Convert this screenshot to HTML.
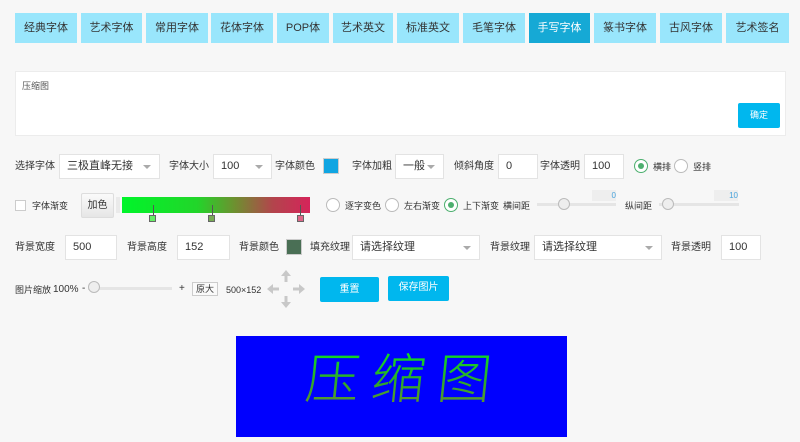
<!DOCTYPE html>
<html><head><meta charset="utf-8"><style>
*{margin:0;padding:0;box-sizing:border-box}
html,body{width:800px;height:442px;overflow:hidden}
body{background:#f7f7f7;font-family:"Liberation Sans","Noto Sans CJK SC",sans-serif;font-size:10px;color:#333;position:relative}
.a{position:absolute}
.tab{position:absolute;top:13px;height:30px;background:#99e6fc;line-height:30px;text-align:center;font-size:11px;color:#333}
.tab.on{background:#16a9d5;color:#fff}
.lbl{position:absolute;font-size:10px;color:#333;line-height:14px;white-space:nowrap}
.inp{position:absolute;background:#fff;border:1px solid #e3e3e3;height:25px;line-height:23px;padding-left:7px;font-size:11px;color:#333;white-space:nowrap}
.sel:after{content:"";position:absolute;right:8px;top:10px;border-left:4px solid transparent;border-right:4px solid transparent;border-top:4px solid #aaa}
.rad{position:absolute;width:14px;height:14px;border:1px solid #bbb;border-radius:50%;background:#fff}
.rad.on{border-color:#4caf6e}
.rad.on:after{content:"";position:absolute;left:3px;top:3px;width:6px;height:6px;border-radius:50%;background:#4caf6e}
.btn{position:absolute;background:#00b7ee;color:#fff;text-align:center;border-radius:2px}
.track{position:absolute;height:3px;background:#e5e5e5}
.knob{position:absolute;width:12px;height:12px;border-radius:50%;background:#eee;border:1px solid #bbb}
</style></head><body>
<div class="tab" style="left:15px;width:62px">经典字体</div>
<div class="tab" style="left:81px;width:61px">艺术字体</div>
<div class="tab" style="left:146px;width:62px">常用字体</div>
<div class="tab" style="left:211px;width:62px">花体字体</div>
<div class="tab" style="left:277px;width:52px">POP体</div>
<div class="tab" style="left:333px;width:60px">艺术英文</div>
<div class="tab" style="left:397px;width:62px">标准英文</div>
<div class="tab" style="left:463px;width:62px">毛笔字体</div>
<div class="tab on" style="left:529px;width:61px">手写字体</div>
<div class="tab" style="left:594px;width:62px">篆书字体</div>
<div class="tab" style="left:660px;width:62px">古风字体</div>
<div class="tab" style="left:726px;width:63px">艺术签名</div>

<div class="a" style="left:15px;top:71px;width:771px;height:65px;background:#fff;border:1px solid #ececec"></div>
<div class="lbl" style="left:22px;top:79px;font-size:9px;color:#555">压缩图</div>
<div class="btn" style="left:738px;top:103px;width:42px;height:25px;line-height:25px;font-size:9px">确定</div>

<!-- row1 -->
<div class="lbl" style="left:15px;top:160px">选择字体</div>
<div class="inp sel" style="left:59px;top:154px;width:101px">三极直峰无接</div>
<div class="lbl" style="left:169px;top:160px">字体大小</div>
<div class="inp sel" style="left:213px;top:154px;width:59px">100</div>
<div class="lbl" style="left:275px;top:160px">字体颜色</div>
<div class="a" style="left:323px;top:158px;width:16px;height:16px;background:#10a5e2;border:1px solid #ccc"></div>
<div class="lbl" style="left:352px;top:160px">字体加粗</div>
<div class="inp sel" style="left:395px;top:154px;width:49px">一般</div>
<div class="lbl" style="left:454px;top:160px">倾斜角度</div>
<div class="inp" style="left:498px;top:154px;width:40px">0</div>
<div class="lbl" style="left:540px;top:160px">字体透明</div>
<div class="inp" style="left:584px;top:154px;width:40px">100</div>
<div class="rad on" style="left:634px;top:159px"></div>
<div class="lbl" style="left:653px;top:160px;font-size:9px">横排</div>
<div class="rad" style="left:674px;top:159px"></div>
<div class="lbl" style="left:693px;top:160px;font-size:9px">竖排</div>

<!-- row2 -->
<div class="a" style="left:15px;top:200px;width:11px;height:11px;background:#fff;border:1px solid #ccc"></div>
<div class="lbl" style="left:32px;top:199px;font-size:9px">字体渐变</div>
<div class="a" style="left:81px;top:193px;width:33px;height:25px;background:linear-gradient(#fafafa,#e6e6e6);border:1px solid #ddd;border-radius:2px;text-align:center;line-height:23px;font-size:10px">加色</div>
<div class="a" style="left:116px;top:197px;width:4px;height:16px;background:#eaeaea"></div>
<div class="a" style="left:122px;top:197px;width:188px;height:16px;background:linear-gradient(90deg,#00f52a 0%,#22d52a 40%,#6e9030 60%,#b2454c 80%,#d5245a 100%)"></div>
<div class="a" style="left:153px;top:205px;width:1px;height:11px;background:#555"></div>
<div class="a" style="left:212px;top:205px;width:1px;height:11px;background:#555"></div>
<div class="a" style="left:300px;top:205px;width:1px;height:11px;background:#555"></div>
<div class="a" style="left:149px;top:215px;width:7px;height:7px;background:#66ee66;border:1px solid #666"></div>
<div class="a" style="left:208px;top:215px;width:7px;height:7px;background:#77aa55;border:1px solid #666"></div>
<div class="a" style="left:297px;top:215px;width:7px;height:7px;background:#dd6688;border:1px solid #666"></div>
<div class="rad" style="left:326px;top:198px"></div>
<div class="lbl" style="left:345px;top:199px;font-size:9px">逐字变色</div>
<div class="rad" style="left:385px;top:198px"></div>
<div class="lbl" style="left:404px;top:199px;font-size:9px">左右渐变</div>
<div class="rad on" style="left:444px;top:198px"></div>
<div class="lbl" style="left:463px;top:199px;font-size:9px">上下渐变</div>
<div class="lbl" style="left:503px;top:199px;font-size:9px">横间距</div>
<div class="a" style="left:592px;top:190px;width:24px;height:11px;background:#eee;color:#49a4dd;font-size:8px;text-align:right;line-height:11px">0</div>
<div class="track" style="left:537px;top:203px;width:79px"></div>
<div class="knob" style="left:558px;top:198px"></div>
<div class="lbl" style="left:625px;top:199px;font-size:9px">纵间距</div>
<div class="a" style="left:714px;top:190px;width:24px;height:11px;background:#eee;color:#49a4dd;font-size:8px;text-align:right;line-height:11px">10</div>
<div class="track" style="left:659px;top:203px;width:80px"></div>
<div class="knob" style="left:662px;top:198px"></div>

<!-- row3 -->
<div class="lbl" style="left:15px;top:241px">背景宽度</div>
<div class="inp" style="left:65px;top:235px;width:52px">500</div>
<div class="lbl" style="left:127px;top:241px">背景高度</div>
<div class="inp" style="left:177px;top:235px;width:53px">152</div>
<div class="lbl" style="left:239px;top:241px">背景颜色</div>
<div class="a" style="left:286px;top:239px;width:16px;height:16px;background:#4a6f55;border:1px solid #ccc"></div>
<div class="lbl" style="left:310px;top:241px">填充纹理</div>
<div class="inp sel" style="left:352px;top:235px;width:128px">请选择纹理</div>
<div class="lbl" style="left:490px;top:241px">背景纹理</div>
<div class="inp sel" style="left:534px;top:235px;width:128px">请选择纹理</div>
<div class="lbl" style="left:671px;top:241px">背景透明</div>
<div class="inp" style="left:721px;top:235px;width:40px">100</div>

<!-- row4 -->
<div class="lbl" style="left:15px;top:283px;font-size:9px">图片缩放</div>
<div class="lbl" style="left:53px;top:283px;font-size:10px">100%</div>
<div class="lbl" style="left:82px;top:282px;font-size:10px">-</div>
<div class="track" style="left:88px;top:287px;width:84px"></div>
<div class="knob" style="left:88px;top:281px"></div>
<div class="lbl" style="left:179px;top:282px;font-size:10px">+</div>
<div class="a" style="left:192px;top:282px;width:26px;height:14px;border:1px solid #ccc;background:#fafafa;font-size:9px;text-align:center;line-height:12px">原大</div>
<div class="lbl" style="left:226px;top:283px;font-size:9px">500×152</div>
<svg class="a" style="left:266px;top:269px" width="40" height="40" viewBox="0 0 40 40" fill="#c8c8c8">
<path d="M20 1l-5 6h3.5v6h3V7H25z"/><path d="M20 39l-5-6h3.5v-6h3v6H25z"/><path d="M1 20l6-5v3.5h6v3H7V25z"/><path d="M39 20l-6-5v3.5h-6v3h6V25z"/></svg>
<div class="btn" style="left:320px;top:277px;width:59px;height:25px;line-height:25px;font-size:10px">重置</div>
<div class="btn" style="left:388px;top:276px;width:61px;height:25px;line-height:24px;font-size:10px">保存图片</div>

<!-- preview -->
<div class="a" style="left:236px;top:336px;width:331px;height:101px;background:#0000fe"></div>
<div class="a" style="left:306px;top:340px;width:200px;height:70px;font-family:'Noto Sans CJK SC',sans-serif;font-size:54px;font-weight:300;line-height:70px;letter-spacing:12px;white-space:nowrap;background:linear-gradient(#00f020,#2fa82a 60%,#6a8f30);-webkit-background-clip:text;background-clip:text;color:transparent;transform:skewX(-6deg)">压缩图</div>
</body></html>
